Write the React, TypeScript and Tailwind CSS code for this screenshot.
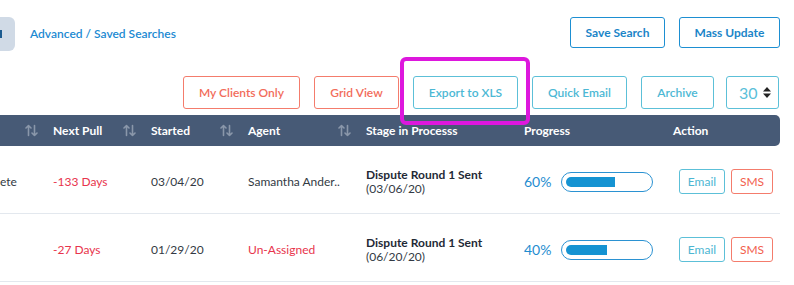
import React from "react";

const SortIcon = () => (
  <svg width="13" height="13" viewBox="0 0 13 13" fill="none" stroke="#8a97aa" strokeWidth="1.6" strokeLinecap="round" strokeLinejoin="round">
    <path d="M3.5 11.5V1.5M1 4L3.5 1.5L6 4" />
    <path d="M9.5 1.5V11.5M7 9L9.5 11.5L12 9" />
  </svg>
);

const cols = "grid grid-cols-[45px_98px_97px_118px_158px_149px_115px]";

function HeaderCell({ label, sort }: { label?: string; sort?: boolean }) {
  return (
    <div className="flex items-center justify-between pl-2 pr-[7px]">
      <span>{label}</span>
      {sort ? <SortIcon /> : null}
    </div>
  );
}

function Row({ pull, started, agent, agentRed, stageDate, pct, fill, first }: { pull: string; started: string; agent: string; agentRed?: boolean; stageDate: string; pct: string; fill: number; first?: string }) {
  return (
    <div className={`${cols} h-[68px] pt-[4px] items-center border-b border-[#e3e8ee] text-[12px] text-[#333a44]`}>
      <div className="pl-0 text-[#333a44]">{first}</div>
      <div className="pl-2 text-[#e8344c]">{pull}</div>
      <div className="pl-2">{started}</div>
      <div className={`pl-2 ${agentRed ? "text-[#e8344c]" : ""}`}>{agent}</div>
      <div className="pl-2 leading-[14px]">
        <div className="font-bold text-[#1f2a36]">Dispute Round 1 Sent</div>
        <div>{stageDate}</div>
      </div>
      <div className="flex items-center pl-2 gap-[10px]">
        <span className="text-[14px] text-[#1f8dd0]">{pct}</span>
        <div className="w-[92px] h-[20px] rounded-full border-[1.5px] border-[#2b92d2] flex items-center pl-[4px]">
          <div className="h-[10px] rounded-l-full bg-[#1593d2]" style={{ width: fill }} />
        </div>
      </div>
      <div className="flex items-center gap-[6px] pl-[14px]">
        <button className="w-[46px] h-[25px] rounded-[3px] border border-[#5cc0d8] text-[#4cb6d2] text-[12px]">Email</button>
        <button className="w-[42px] h-[25px] rounded-[3px] border border-[#f47c6c] text-[#f2604e] text-[12px]">SMS</button>
      </div>
    </div>
  );
}

export default function App() {
  return (
    <div className="relative w-[794px] h-[285px] overflow-hidden bg-white font-['Lato',_'Open_Sans',_sans-serif]">
      {/* top row */}
      <div className="flex items-start pt-[17px] pr-[14px]">
        <div className="w-[15px] h-[34px] rounded-r-md bg-[#d0dae6] flex items-center">
          <div className="w-[2px] h-[8px] bg-[#1c5b8f]" />
        </div>
        <a className="ml-[15px] mt-[8px] text-[12px] font-semibold text-[#1b8ad2]">Advanced / Saved Searches</a>
        <div className="ml-auto flex gap-[14px]">
          <button className="w-[95px] h-[31px] rounded-[3px] border border-[#1d8fd2] text-[#1b85c8] text-[12px] font-bold">Save Search</button>
          <button className="w-[101px] h-[31px] rounded-[3px] border border-[#1d8fd2] text-[#1b85c8] text-[12px] font-bold">Mass Update</button>
        </div>
      </div>
      {/* second row */}
      <div className="flex justify-end pr-[15px] mt-[25px] gap-[14px] text-[12px] font-semibold">
        <button className="w-[117px] h-[33px] rounded-[3px] border border-[#f47c6c] text-[#f26c5a]">My Clients Only</button>
        <button className="w-[85px] h-[33px] rounded-[3px] border border-[#f47c6c] text-[#f26c5a]">Grid View</button>
        <button className="w-[105px] h-[33px] rounded-[3px] border border-[#5cc0d8] text-[#4cb8d4]">Export to XLS</button>
        <button className="w-[95px] h-[33px] rounded-[3px] border border-[#5cc0d8] text-[#4cb8d4]">Quick Email</button>
        <button className="w-[73px] h-[33px] rounded-[3px] border border-[#5cc0d8] text-[#4cb8d4]">Archive</button>
        <div className="-ml-[2px] w-[53px] h-[33px] rounded-[3px] border border-[#5cc0d8] flex items-center pl-[12px] gap-[5px]">
          <span className="text-[16px] font-normal text-[#5bbfd9]">30</span>
          <svg width="8" height="11" viewBox="0 0 8 11" fill="#222">
            <path d="M4 0L8 4.5H0Z" />
            <path d="M4 11L8 6.5H0Z" />
          </svg>
        </div>
      </div>
      {/* table */}
      <div className="mt-[6px] w-[780px]">
        <div className={`${cols} h-[31px] items-center bg-[#475a76] rounded-r-[5px] text-white text-[12px] font-bold`}>
          <HeaderCell sort />
          <HeaderCell label="Next Pull" sort />
          <HeaderCell label="Started" sort />
          <HeaderCell label="Agent" sort />
          <HeaderCell label="Stage in Processs" />
          <HeaderCell label="Progress" />
          <HeaderCell label="Action" />
        </div>
        <Row first="ete" pull="-133 Days" started="03/04/20" agent="Samantha Ander.." stageDate="(03/06/20)" pct="60%" fill={49} />
        <Row pull="-27 Days" started="01/29/20" agent="Un-Assigned" agentRed stageDate="(06/20/20)" pct="40%" fill={41} />
      </div>
      {/* highlight */}
      <div className="absolute left-[400px] top-[57px] w-[130px] h-[68px] rounded-[6px] border-[4px] border-[#dd17dd]" />
    </div>
  );
}
